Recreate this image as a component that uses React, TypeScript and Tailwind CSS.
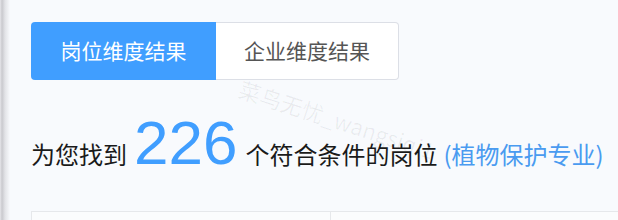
import React from "react";

export default function App() {
  const cjk = { fontFamily: '"Noto Sans CJK SC", "Microsoft YaHei", sans-serif' };
  return (
    <div className="relative flex h-[220px] w-[618px] overflow-hidden bg-[#f8fafd]" style={cjk}>
      <div className="h-full w-[10px] shrink-0 bg-[linear-gradient(to_right,#e6e6ea_0px,#c9c9ce_2px,#e2e3e7_5px,#f8fafd_10px)]" />
      <div className="flex flex-1 flex-col pl-[21px] pt-[22px]">
        <div className="flex h-[58px] w-[368px] shrink-0">
          <div className="flex w-[185px] items-center justify-center rounded-l-[4px] bg-[#409eff] text-[21px] text-white">
            岗位维度结果
          </div>
          <div className="flex flex-1 items-center justify-center rounded-r-[4px] border border-l-0 border-[#dcdfe6] bg-white text-[21px] text-[#555]">
            企业维度结果
          </div>
        </div>
        <div className="mt-[32px] flex h-[64px] shrink-0 items-baseline whitespace-nowrap text-[24px] leading-none text-[#1a1a1a]">
          <span>为您找到</span>
          <span
            className="ml-[7px] mr-[8px] text-[62px] leading-none text-[#409eff]"
            style={{ fontFamily: '"Liberation Sans", Arial, sans-serif' }}
          >
            226
          </span>
          <span>个符合条件的岗位</span>
          <span className="ml-[6px] text-[#4a9bf0]">(植物保护专业)</span>
        </div>
        <div className="mt-[35px] flex h-[20px] w-[600px] shrink-0 border border-[#e6e8eb] bg-[#fbfcfd]">
          <div className="w-[299px] border-r border-[#e6e8eb]" />
          <div className="flex-1" />
        </div>
      </div>
      <div className="pointer-events-none absolute left-[245px] top-[72px] origin-top-left rotate-[18deg] whitespace-nowrap text-[22px] text-black/[0.06]">
        菜鸟无忧_wangsiqi1
      </div>
    </div>
  );
}
